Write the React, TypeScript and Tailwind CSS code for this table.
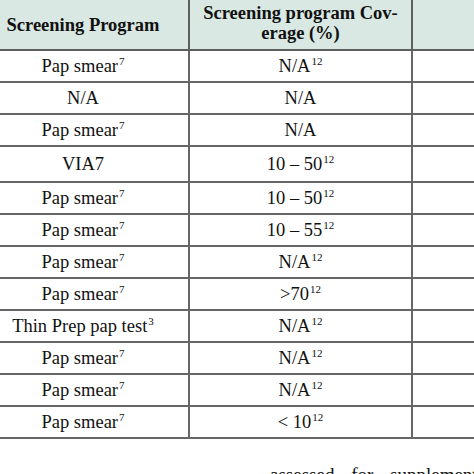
import React from "react";

type Row = { a: React.ReactNode; b: React.ReactNode; h?: string };

const S = ({ children }: { children: React.ReactNode }) => (
  <span className="relative -top-[7px] ml-[1px] text-[11px] leading-none">{children}</span>
);

const pap = (
  <>
    Pap smear<S>7</S>
  </>
);

const rows: Row[] = [
  { a: pap, b: <>N/A<S>12</S></> },
  { a: "N/A", b: "N/A" },
  { a: pap, b: "N/A" },
  { a: "VIA7", b: <>10 – 50<S>12</S></>, h: "h-[36px]" },
  { a: pap, b: <>10 – 50<S>12</S></> },
  { a: pap, b: <>10 – 55<S>12</S></> },
  { a: pap, b: <>N/A<S>12</S></> },
  { a: pap, b: <>&gt;70<S>12</S></> },
  { a: <>Thin Prep pap test<S>3</S></>, b: <>N/A<S>12</S></> },
  { a: pap, b: <>N/A<S>12</S></> },
  { a: pap, b: <>N/A<S>12</S></> },
  { a: pap, b: <>&lt; 10<S>12</S></> },
];

export default function App() {
  return (
    <div
      className="w-[474px] h-[474px] overflow-hidden bg-white text-[#111]"
      style={{ fontFamily: '"Liberation Serif", serif' }}
    >
      <div className="grid w-[560px] grid-cols-[190px_223px_147px] text-[18.5px] leading-[20px]">
        <div className="flex h-[51px] items-center justify-center border-b-2 border-r-2 border-[#5e5e5e] bg-[#d9e8e2] pr-[22px] font-bold">
          Screening Program
        </div>
        <div className="flex h-[51px] flex-col items-center justify-center border-b-2 border-r-2 border-[#5e5e5e] bg-[#d9e8e2] pb-[4px] font-bold">
          <span>Screening program Cov-</span>
          <span>erage (%)</span>
        </div>
        <div className="h-[51px] border-b-2 border-[#5e5e5e] bg-[#d9e8e2]" />
        {rows.map((r, i) => (
          <React.Fragment key={i}>
            <div
              className={`flex ${r.h ?? "h-[32px]"} items-center justify-center border-b-2 border-r-2 border-[#666] pr-[22px]`}
            >
              <span>{r.a}</span>
            </div>
            <div
              className={`flex ${r.h ?? "h-[32px]"} items-center justify-center border-b-2 border-r-2 border-[#666]`}
            >
              <span>{r.b}</span>
            </div>
            <div className={`${r.h ?? "h-[32px]"} border-b-2 border-[#666]`} />
          </React.Fragment>
        ))}
      </div>
      <div className="mt-[26px] whitespace-nowrap pl-[270px] text-[19px] leading-[20px] [word-spacing:12px]">
        assessed for supplementary screening
      </div>
    </div>
  );
}
